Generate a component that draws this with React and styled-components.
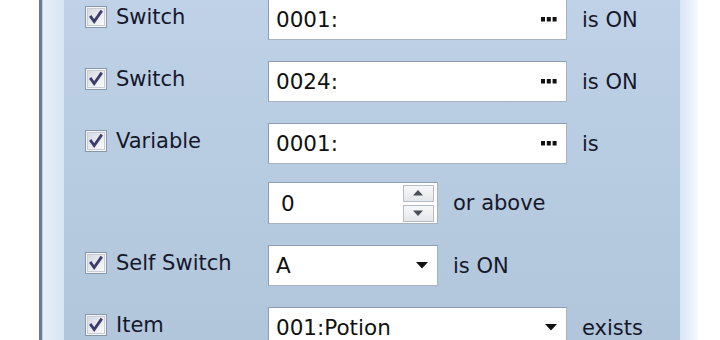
import React from "react";
import styled, { createGlobalStyle } from "styled-components";

const GlobalStyle = createGlobalStyle`
  html, body {
    margin: 0;
    padding: 0;
    background: #ffffff;
    overflow: hidden;
  }
  body {
    font-family: "DejaVu Sans", "Liberation Sans", sans-serif;
  }
`;

function CheckMark() {
  return (
    <svg width="22" height="22" viewBox="0 0 22 22">
      <defs>
        <linearGradient id="cbfill" x1="0" y1="0" x2="1" y2="1">
          <stop offset="0" stopColor="#d6d9df" />
          <stop offset="1" stopColor="#fbfbfc" />
        </linearGradient>
      </defs>
      <rect x="0.5" y="0.5" width="21" height="21" fill="#f4f5f7" stroke="#8a97a8" />
      <rect x="2.5" y="2.5" width="17" height="17" fill="url(#cbfill)" stroke="#c9ced6" />
      <path
        d="M6 11 L9.2 15.6 L16 5.8"
        fill="none"
        stroke="#3c3c6e"
        strokeWidth="2.8"
        strokeLinecap="square"
        strokeLinejoin="miter"
      />
    </svg>
  );
}

function Dots() {
  return (
    <svg width="16" height="5" viewBox="0 0 16 5">
      <rect x="0" y="0" width="4" height="4.5" fill="#111" />
      <rect x="5.8" y="0" width="4" height="4.5" fill="#111" />
      <rect x="11.6" y="0" width="4" height="4.5" fill="#111" />
    </svg>
  );
}

function DownArrow() {
  return (
    <svg width="12" height="7" viewBox="0 0 12 7">
      <path d="M0 0 H12 L6 6.5 Z" fill="#111" />
    </svg>
  );
}

function SpinArrow({ up }) {
  return (
    <svg width="10" height="6" viewBox="0 0 10 6">
      <path d={up ? "M0 5.5 H10 L5 0 Z" : "M0 0.5 H10 L5 6 Z"} fill="#4a4f58" />
    </svg>
  );
}

const rows = [
  { label: "Switch", kind: "ref", value: "0001:", after: "is ON" },
  { label: "Switch", kind: "ref", value: "0024:", after: "is ON" },
  { label: "Variable", kind: "ref", value: "0001:", after: "is" },
  { label: null, kind: "spin", value: "0", after: "or above" },
  { label: "Self Switch", kind: "combo", short: true, value: "A", after: "is ON" },
  { label: "Item", kind: "combo", value: "001:Potion", after: "exists" },
];

export default function App() {
  return (
    <>
      <GlobalStyle />
      <Frame>
        <Window>
          <SideStrip />
          <Panel>
            <Grid>
              {rows.map((r, i) => (
                <Row key={i} $spin={r.kind === "spin"}>
                  <LabelCell>
                    {r.label && (
                      <>
                        <CheckMark />
                        <LabelText>{r.label}</LabelText>
                      </>
                    )}
                  </LabelCell>
                  <Field $short={r.short || r.kind === "spin"} $spin={r.kind === "spin"}>
                    <FieldText $spin={r.kind === "spin"}>{r.value}</FieldText>
                    {r.kind === "ref" && (
                      <FieldIcon>
                        <Dots />
                      </FieldIcon>
                    )}
                    {r.kind === "combo" && (
                      <FieldIcon>
                        <DownArrow />
                      </FieldIcon>
                    )}
                    {r.kind === "spin" && (
                      <SpinButtons>
                        <SpinButton>
                          <SpinArrow up />
                        </SpinButton>
                        <SpinButton>
                          <SpinArrow />
                        </SpinButton>
                      </SpinButtons>
                    )}
                  </Field>
                  <AfterText>{r.after}</AfterText>
                </Row>
              ))}
            </Grid>
          </Panel>
          <RightStrip />
        </Window>
      </Frame>
    </>
  );
}

const Frame = styled.div`
  width: 720px;
  height: 340px;
  padding: 0 22px 0 39px;
  box-sizing: border-box;
  background: #ffffff;
`;

const Window = styled.div`
  display: flex;
  height: 100%;
  border-left: 3px solid #6a7c92;
`;

const SideStrip = styled.div`
  width: 21px;
  background: linear-gradient(90deg, #e6eff9 0%, #d8e5f3 100%);
  border-left: 1px solid #c4d3e4;
`;

const Panel = styled.div`
  width: 617px;
  height: 100%;
  background: linear-gradient(180deg, #bfd2e7 0%, #b7cbe1 50%, #b1c5db 100%);
  overflow: hidden;
`;

const RightStrip = styled.div`
  width: 18px;
  background: linear-gradient(90deg, #d9e6f4 0%, #e8f0f9 60%, #f7fafd 100%);
`;

const Grid = styled.div`
  display: flex;
  flex-direction: column;
  gap: 21px;
  padding-left: 21px;
  margin-top: -1px;
`;

const Row = styled.div`
  display: grid;
  grid-template-columns: 183px auto 1fr;
  align-items: center;
  height: ${(p) => (p.$spin ? "42px" : "41px")};
  margin-top: ${(p) => (p.$spin ? "-3px" : "0")};
`;

const LabelCell = styled.div`
  display: flex;
  align-items: center;
  gap: 9px;
  padding-bottom: 6px;
`;

const LabelText = styled.span`
  font-size: 21px;
  color: #16182a;
  white-space: nowrap;
`;

const Field = styled.div`
  position: relative;
  display: flex;
  align-items: center;
  width: ${(p) => (p.$short ? "170px" : "299px")};
  height: ${(p) => (p.$spin ? "42px" : "41px")};
  box-sizing: border-box;
  background: #ffffff;
  border: 1px solid #8e9db0;
  border-right-color: #a6b3c2;
  border-bottom-color: #a6b3c2;
`;

const FieldText = styled.span`
  flex: 1;
  padding-left: ${(p) => (p.$spin ? "12px" : "7px")};
  font-size: 21.5px;
  color: #111111;
  white-space: nowrap;
`;

const FieldIcon = styled.span`
  display: flex;
  align-items: center;
  padding-right: 9px;
`;

const SpinButtons = styled.div`
  display: flex;
  flex-direction: column;
  gap: 3px;
  padding: 0 3px 0 0;
`;

const SpinButton = styled.div`
  display: flex;
  align-items: center;
  justify-content: center;
  width: 31px;
  height: 17px;
  box-sizing: border-box;
  border: 1px solid #b4bcc7;
  background: linear-gradient(180deg, #f7f8f9 0%, #e4e7eb 100%);
`;

const AfterText = styled.span`
  padding-left: 15px;
  font-size: 21px;
  color: #16182a;
  white-space: nowrap;
`;
